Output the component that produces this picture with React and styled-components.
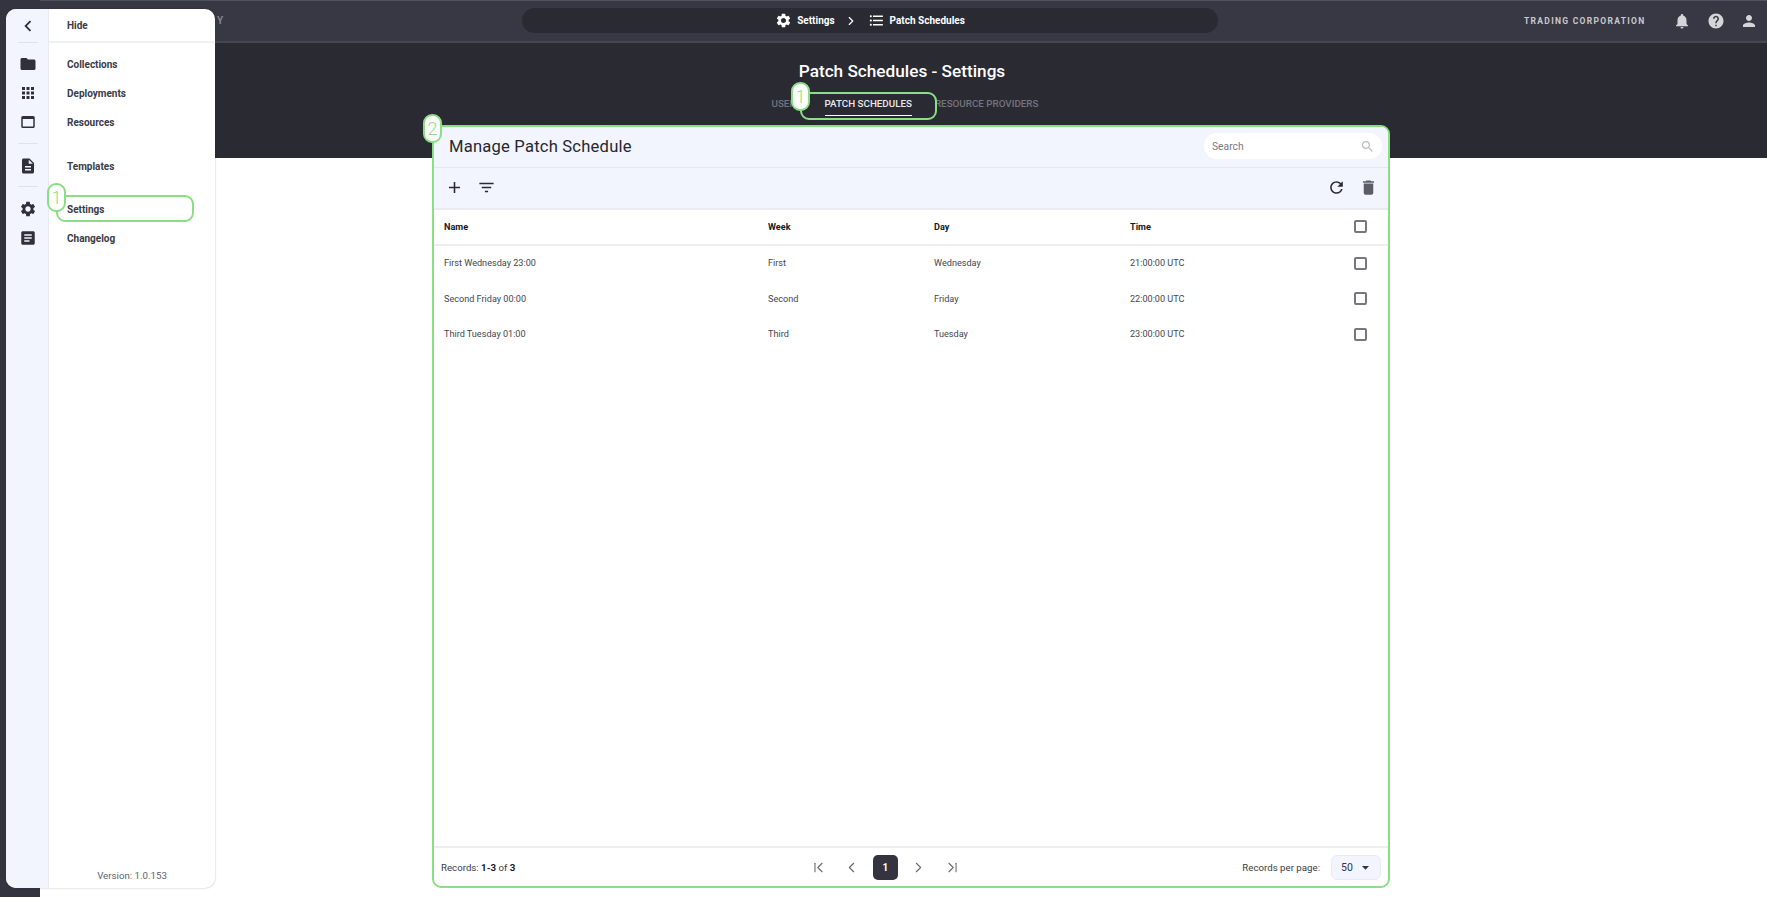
import React from "react";
import styled, { createGlobalStyle } from "styled-components";
import {
  MdChevronLeft,
  MdFolder,
  MdApps,
  MdWebAsset,
  MdDescription,
  MdSettings,
  MdArticle,
  MdNotifications,
  MdHelp,
  MdPerson,
  MdAdd,
  MdFilterList,
  MdRefresh,
  MdDelete,
  MdSearch,
  MdFormatListBulleted,
  MdArrowDropDown,
} from "react-icons/md";
import { ChevronFirst, ChevronLast, ChevronLeft, ChevronRight } from "lucide-react";

const green = "#8adf85";

const GlobalStyle = createGlobalStyle`
  html, body { margin: 0; padding: 0; height: 100%; background: #fff; }
  body { font-family: Roboto, "Liberation Sans", sans-serif; color: #22232b; }
  * { box-sizing: border-box; }
`;

const Page = styled.div`
  position: relative;
  display: flex;
  width: 100%;
  height: 897px;
  overflow: hidden;
`;

const DarkRail = styled.div`
  width: 40px;
  flex: none;
  background: #33343f;
`;

const Main = styled.div`
  flex: 1;
  display: flex;
  flex-direction: column;
  min-width: 0;
`;

const TopBar = styled.header`
  height: 43px;
  flex: none;
  display: flex;
  align-items: center;
  background: #373843;
  border-top: 1px solid #50515a;
  border-bottom: 2px solid #46474f;
  padding: 0 1px 1px 0;
`;

const Brand = styled.div`
  width: 482px;
  flex: none;
  padding-left: 177px;
  font-size: 10px;
  font-weight: 700;
  letter-spacing: 1.5px;
  color: #85858d;
`;

const Crumbs = styled.nav`
  width: 696px;
  height: 25px;
  flex: none;
  display: flex;
  align-items: center;
  justify-content: center;
  gap: 5px;
  border-radius: 13px;
  background: #2a2a33;
  color: #fff;
  font-size: 10px;
  font-weight: 700;
  svg {
    flex: none;
  }
`;

const CrumbArrow = styled(ChevronRight)`
  margin: 0 5px 0 4px;
`;

const TopRight = styled.div`
  flex: 1;
  display: flex;
  align-items: center;
  justify-content: flex-end;
  color: #d5d5d9;
`;

const Company = styled.span`
  font-size: 8.5px;
  font-weight: 700;
  letter-spacing: 1.3px;
  margin-right: 20px;
  color: #c9c9ce;
`;

const TopIcon = styled.span`
  width: 33.5px;
  display: flex;
  justify-content: center;
`;

const Hero = styled.section`
  height: 115px;
  flex: none;
  display: flex;
  flex-direction: column;
  align-items: center;
  background: #2a2a33;
  padding-top: 18px;
`;

const PageTitle = styled.h1`
  margin: 0 3px 0 0;
  font-size: 17.2px;
  line-height: 20px;
  font-weight: 500;
  color: #fff;
`;

const Tabs = styled.div`
  display: flex;
  gap: 23px;
  margin-top: 13px;
  margin-left: 3px;
`;

const Tab = styled.div`
  height: 22px;
  padding-top: 3px;
  font-size: 9.8px;
  font-weight: 500;
  line-height: 13px;
  color: ${(p) => (p.$active ? "#e9e9ec" : "#74747e")};
  position: relative;
  &::after {
    content: "";
    display: ${(p) => (p.$active ? "block" : "none")};
    position: absolute;
    left: 0;
    right: 0;
    bottom: 0;
    height: 1px;
    background: #fff;
  }
`;

const Panel = styled.main`
  position: relative;
  width: 958px;
  height: 763px;
  margin: -33px 0 0 392px;
  border: 2.5px solid ${green};
  border-radius: 9px;
  background: #fff;
  display: flex;
  flex-direction: column;
`;

const PanelHead = styled.div`
  height: 40px;
  display: flex;
  align-items: center;
  justify-content: space-between;
  background: #f2f5fd;
  padding: 0 6px 2px 15px;
  border-radius: 7px 7px 0 0;
`;

const PanelTitle = styled.h2`
  margin: 0;
  font-size: 16.6px;
  font-weight: 400;
  letter-spacing: 0.2px;
  color: #26272f;
`;

const Search = styled.div`
  width: 178px;
  height: 26px;
  border-radius: 13px;
  background: #fff;
  display: flex;
  align-items: center;
  justify-content: space-between;
  padding: 0 7px 0 8px;
  color: #bdbdc2;
`;

const SearchInput = styled.input`
  width: 130px;
  padding: 0;
  border: none;
  outline: none;
  background: transparent;
  font-family: inherit;
  font-size: 10.3px;
  &::placeholder {
    color: #77777f;
    opacity: 1;
  }
`;

const Toolbar = styled.div`
  height: 42.5px;
  display: flex;
  align-items: center;
  justify-content: space-between;
  background: #f2f5fd;
  border-top: 1px solid #e6e8ee;
  border-bottom: 2px solid #e9ebf0;
  padding: 0 10px 0 11px;
`;

const ToolGroup = styled.div`
  display: flex;
  align-items: center;
  gap: 13px;
`;

const ToolIcon = styled.span`
  display: flex;
  color: ${(p) => p.$color || "#2a2a33"};
`;

const Row = styled.div`
  display: grid;
  grid-template-columns: 324px 166px 196px 1fr 13px;
  align-items: center;
  height: ${(p) => (p.$head ? "36px" : "35.5px")};
  padding: 0 21px 0 10px;
  font-size: 9.1px;
  color: ${(p) => (p.$head ? "#17181e" : "#44454d")};
  font-weight: ${(p) => (p.$head ? 700 : 400)};
  border-bottom: ${(p) => (p.$head ? "2px solid #eceef1" : "none")};
`;

const Check = styled.input.attrs({ type: "checkbox" })`
  appearance: none;
  width: 13px;
  height: 13px;
  margin: 0;
  border: 2px solid #77777f;
  border-radius: 2px;
  background: #fff;
`;

const Spacer = styled.div`
  flex: 1;
`;

const Footer = styled.footer`
  height: 40px;
  display: flex;
  align-items: center;
  justify-content: space-between;
  border-top: 2px solid #eceef1;
  padding: 1px 7px 0 7px;
  font-size: 9.7px;
  color: #3b3c44;
  b {
    color: #17181e;
    font-weight: 700;
  }
`;

const Pager = styled.div`
  display: flex;
  align-items: center;
  margin-left: 13px;
`;

const PageButton = styled.span`
  width: 33.5px;
  height: 25px;
  display: flex;
  align-items: center;
  justify-content: center;
  color: #66666e;
`;

const CurrentPage = styled.span`
  width: 25px;
  height: 25px;
  display: flex;
  align-items: center;
  justify-content: center;
  margin: 0 4.25px;
  border-radius: 5px;
  background: #33343f;
  color: #fff;
  font-size: 10px;
  font-weight: 700;
`;

const PerPage = styled.div`
  display: flex;
  align-items: center;
  gap: 11px;
`;

const Select = styled.div`
  width: 50px;
  height: 25px;
  display: flex;
  align-items: center;
  justify-content: space-between;
  padding: 0 6px 0 9px;
  border: 1px solid #e8ebf2;
  border-radius: 6px;
  background: #f2f5fd;
  color: #33343f;
  font-size: 10.5px;
`;

const Drawer = styled.aside`
  position: absolute;
  left: 6px;
  top: 9px;
  width: 209px;
  height: 879px;
  display: flex;
  border-radius: 10px;
  overflow: hidden;
  background: #fff;
  box-shadow: 0 0 2px rgba(40, 42, 60, 0.35);
`;

const IconRail = styled.div`
  width: 43px;
  flex: none;
  display: flex;
  flex-direction: column;
  align-items: center;
  padding-left: 1px;
  background: #f2f5fd;
  border-right: 1px solid #e9ebf2;
  color: #2f303b;
`;

const RailIcon = styled.span`
  height: ${(p) => p.$h || 29}px;
  flex: none;
  display: flex;
  align-items: center;
  justify-content: center;
`;

const RailRule = styled.span`
  width: 20px;
  height: 1px;
  flex: none;
  margin: ${(p) => p.$m || "0"};
  background: #dfe2e8;
`;

const Menu = styled.div`
  flex: 1;
  display: flex;
  flex-direction: column;
`;

const MenuHide = styled.div`
  height: 34px;
  flex: none;
  display: flex;
  align-items: center;
  padding-left: 18px;
  border-bottom: 2px solid #eef0f4;
  font-size: 10px;
  font-weight: 700;
  color: #3a3b47;
`;

const MenuItem = styled.div`
  height: 29px;
  flex: none;
  display: flex;
  align-items: center;
  padding-left: 18px;
  margin-top: ${(p) => p.$gap || 0}px;
  font-size: 10px;
  font-weight: 700;
  color: #3a3b47;
`;

const Version = styled.div`
  margin-top: auto;
  padding-bottom: 7px;
  text-align: center;
  font-size: 9.7px;
  color: #5f6068;
`;

const Outline = styled.div`
  position: absolute;
  left: ${(p) => p.$x}px;
  top: ${(p) => p.$y}px;
  width: ${(p) => p.$w}px;
  height: ${(p) => p.$h}px;
  border: 2px solid ${green};
  border-radius: 9px;
`;

const Badge = styled.div`
  position: absolute;
  left: ${(p) => p.$x}px;
  top: ${(p) => p.$y}px;
  width: 19px;
  height: 29px;
  display: flex;
  align-items: center;
  justify-content: center;
  border: 2px solid ${green};
  border-radius: 9px;
  background: #fff;
  color: ${green};
  font-size: 18px;
  font-weight: 300;
`;

const schedules = [
  { name: "First Wednesday 23:00", week: "First", day: "Wednesday", time: "21:00:00 UTC" },
  { name: "Second Friday 00:00", week: "Second", day: "Friday", time: "22:00:00 UTC" },
  { name: "Third Tuesday 01:00", week: "Third", day: "Tuesday", time: "23:00:00 UTC" },
];

export default function App() {
  return (
    <Page>
      <GlobalStyle />
      <DarkRail />
      <Main>
        <TopBar>
          <Brand>Y</Brand>
          <Crumbs>
            <MdSettings size={17} />
            <span>Settings</span>
            <CrumbArrow size={14} />
            <MdFormatListBulleted size={17} />
            <span>Patch Schedules</span>
          </Crumbs>
          <TopRight>
            <Company>TRADING CORPORATION</Company>
            <TopIcon><MdNotifications size={18} /></TopIcon>
            <TopIcon><MdHelp size={18} /></TopIcon>
            <TopIcon><MdPerson size={18} /></TopIcon>
          </TopRight>
        </TopBar>
        <Hero>
          <PageTitle>Patch Schedules - Settings</PageTitle>
          <Tabs>
            <Tab>USERS</Tab>
            <Tab $active>PATCH SCHEDULES</Tab>
            <Tab>RESOURCE PROVIDERS</Tab>
          </Tabs>
        </Hero>
        <Panel>
          <PanelHead>
            <PanelTitle>Manage Patch Schedule</PanelTitle>
            <Search>
              <SearchInput placeholder="Search" />
              <MdSearch size={15} />
            </Search>
          </PanelHead>
          <Toolbar>
            <ToolGroup>
              <ToolIcon><MdAdd size={19} /></ToolIcon>
              <ToolIcon><MdFilterList size={19} /></ToolIcon>
            </ToolGroup>
            <ToolGroup>
              <ToolIcon><MdRefresh size={19} /></ToolIcon>
              <ToolIcon $color="#5b5c68"><MdDelete size={19} /></ToolIcon>
            </ToolGroup>
          </Toolbar>
          <Row $head>
            <span>Name</span>
            <span>Week</span>
            <span>Day</span>
            <span>Time</span>
            <Check />
          </Row>
          {schedules.map((s) => (
            <Row key={s.name}>
              <span>{s.name}</span>
              <span>{s.week}</span>
              <span>{s.day}</span>
              <span>{s.time}</span>
              <Check />
            </Row>
          ))}
          <Spacer />
          <Footer>
            <span>
              Records: <b>1-3</b> of <b>3</b>
            </span>
            <Pager>
              <PageButton><ChevronFirst size={17} strokeWidth={1.5} /></PageButton>
              <PageButton><ChevronLeft size={17} strokeWidth={1.5} /></PageButton>
              <CurrentPage>1</CurrentPage>
              <PageButton><ChevronRight size={17} strokeWidth={1.5} /></PageButton>
              <PageButton><ChevronLast size={17} strokeWidth={1.5} /></PageButton>
            </Pager>
            <PerPage>
              <span>Records per page:</span>
              <Select>
                <span>50</span>
                <MdArrowDropDown size={17} />
              </Select>
            </PerPage>
          </Footer>
        </Panel>
      </Main>
      <Drawer>
        <IconRail>
          <RailIcon $h={33}><MdChevronLeft size={22} /></RailIcon>
          <RailRule />
          <RailIcon $h={6.5} />
          <RailIcon><MdFolder size={18} /></RailIcon>
          <RailIcon><MdApps size={18} /></RailIcon>
          <RailIcon><MdWebAsset size={18} /></RailIcon>
          <RailRule $m="6px 0 7.5px" />
          <RailIcon><MdDescription size={18} /></RailIcon>
          <RailRule $m="6px 0 7px" />
          <RailIcon><MdSettings size={18} /></RailIcon>
          <RailIcon><MdArticle size={18} /></RailIcon>
        </IconRail>
        <Menu>
          <MenuHide>Hide</MenuHide>
          <MenuItem $gap={7}>Collections</MenuItem>
          <MenuItem>Deployments</MenuItem>
          <MenuItem>Resources</MenuItem>
          <MenuItem $gap={15}>Templates</MenuItem>
          <MenuItem $gap={13.5}>Settings</MenuItem>
          <MenuItem>Changelog</MenuItem>
          <Version>Version: 1.0.153</Version>
        </Menu>
      </Drawer>
      <Outline $x={56} $y={195} $w={138} $h={27} />
      <Badge $x={47} $y={183}>1</Badge>
      <Outline $x={800} $y={92} $w={137} $h={28} />
      <Badge $x={791} $y={82}>1</Badge>
      <Badge $x={423} $y={114}>2</Badge>
    </Page>
  );
}
